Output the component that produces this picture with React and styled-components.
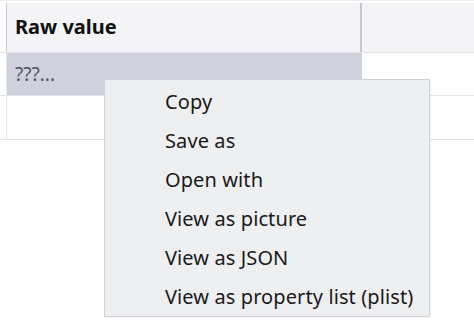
import React from "react";
import styled, { createGlobalStyle } from "styled-components";

const GlobalStyle = createGlobalStyle`
  html, body {
    margin: 0;
    padding: 0;
    background: #ffffff;
    font-family: "Noto Sans", "Open Sans", sans-serif;
  }
`;

const Page = styled.div`
  position: relative;
  width: 474px;
  height: 335px;
  overflow: hidden;
  background: #ffffff;
`;

const Grid = styled.div`
  padding-top: 2px;
  border-top: 1px solid #eceef2;
`;

const Row = styled.div`
  display: grid;
  grid-template-columns: 6px 356px 1fr;
  height: ${({ h }) => h}px;
  border-bottom: 1px solid #e3e4e8;
  background: ${({ header }) => (header ? "#f4f4f6" : "#ffffff")};
`;

const Gutter = styled.div`
  background: #ffffff;
`;

const Cell = styled.div`
  display: flex;
  align-items: center;
  padding-left: 8px;
  padding-bottom: ${({ header }) => (header ? "2px" : "0")};
  border-left: 1px solid ${({ header }) => (header ? "#c9ccd8" : "#e3e4e8")};
  border-right: ${({ header }) => (header ? "2px solid #c3c7d6" : "none")};
  background: ${({ selected }) => (selected ? "#cfd1dd" : "transparent")};
  font-size: ${({ header }) => (header ? "20px" : "19px")};
  font-weight: ${({ header }) => (header ? 700 : 400)};
  color: ${({ header }) => (header ? "#111111" : "#53555f")};
`;

const Filler = styled.div``;

const Menu = styled.ul`
  position: absolute;
  left: 104px;
  top: 79px;
  width: 324px;
  margin: 0;
  padding: 2px 0 0;
  list-style: none;
  background: #eeeff1;
  border: 1px solid #cfd1d9;
  box-shadow: 1px 1px 2px rgba(0, 0, 0, 0.06);
`;

const MenuItem = styled.li`
  display: flex;
  align-items: center;
  height: 39px;
  padding-left: 60px;
  padding-bottom: 1px;
  box-sizing: border-box;
  font-size: 20px;
  letter-spacing: 0.1px;
  color: #1a1a1a;
  white-space: nowrap;
`;

const items = [
  "Copy",
  "Save as",
  "Open with",
  "View as picture",
  "View as JSON",
  "View as property list (plist)",
];

export default function App() {
  return (
    <Page>
      <GlobalStyle />
      <Grid>
        <Row header h={49}>
          <Gutter />
          <Cell header>Raw value</Cell>
          <Filler />
        </Row>
        <Row h={42}>
          <Gutter />
          <Cell selected>???...</Cell>
          <Filler />
        </Row>
        <Row h={43}>
          <Gutter />
          <Cell />
          <Filler />
        </Row>
      </Grid>
      <Menu>
        {items.map((label) => (
          <MenuItem key={label}>{label}</MenuItem>
        ))}
      </Menu>
    </Page>
  );
}
